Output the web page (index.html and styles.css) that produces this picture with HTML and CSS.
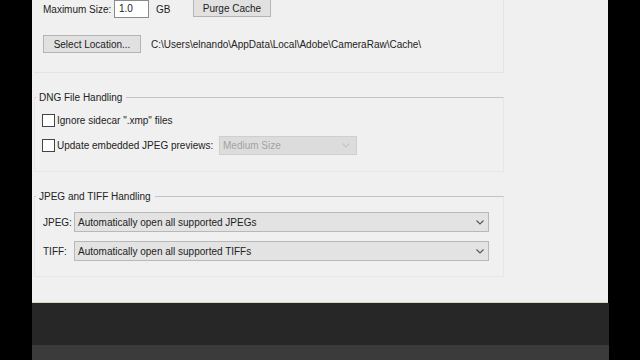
FILE: index.html
```html
<!DOCTYPE html>
<html>
<head>
<meta charset="utf-8">
<link rel="stylesheet" href="styles.css">
</head>
<body>
<div class="screen">
  <div class="dialog">
    <div class="group-cache">
      <div class="row row-size">
        <span class="label">Maximum Size:</span>
        <span class="input">1.0</span>
        <span class="unit">GB</span>
        <span class="btn btn-purge">Purge Cache</span>
      </div>
      <div class="row row-loc">
        <span class="btn btn-loc">Select Location...</span>
        <span class="path">C:\Users\elnando\AppData\Local\Adobe\CameraRaw\Cache\</span>
      </div>
    </div>

    <fieldset class="group group-dng">
      <legend>DNG File Handling</legend>
      <div class="check-row first"><span class="box"></span><span>Ignore sidecar ".xmp" files</span></div>
      <div class="check-row"><span class="box"></span><span class="check-label">Update embedded JPEG previews:</span>
        <span class="select disabled"><span>Medium Size</span><svg class="chev" width="8" height="5" viewBox="0 0 8 5"><path d="M0.5 0.5 L4 4 L7.5 0.5" fill="none" stroke="#c4c4c4" stroke-width="1.1"/></svg></span>
      </div>
    </fieldset>

    <fieldset class="group group-jt">
      <legend>JPEG and TIFF Handling</legend>
      <div class="sel-row first"><span class="sel-label">JPEG:</span>
        <span class="select wide"><span>Automatically open all supported JPEGs</span><svg class="chev" width="8" height="5" viewBox="0 0 8 5"><path d="M0.5 0.5 L4 4 L7.5 0.5" fill="none" stroke="#555" stroke-width="1.1"/></svg></span>
      </div>
      <div class="sel-row"><span class="sel-label">TIFF:</span>
        <span class="select wide"><span>Automatically open all supported TIFFs</span><svg class="chev" width="8" height="5" viewBox="0 0 8 5"><path d="M0.5 0.5 L4 4 L7.5 0.5" fill="none" stroke="#555" stroke-width="1.1"/></svg></span>
      </div>
    </fieldset>
  </div>
  <div class="taskbar"></div>
  <div class="band"></div>
</div>
</body>
</html>
```

FILE: styles.css
```css
html, body {
  margin: 0;
  padding: 0;
  background: #000;
}
.screen {
  width: 640px;
  height: 360px;
  overflow: hidden;
  padding: 0 32px;
  box-sizing: border-box;
  display: flex;
  flex-direction: column;
  font-family: "Liberation Sans", Arial, sans-serif;
  font-size: 10px;
  color: #222;
  white-space: nowrap;
}
.dialog {
  width: 576px;
  height: 303px;
  flex: none;
  background: #f0f0f0;
  border-bottom: 1px solid #d8d4c4;
  box-sizing: border-box;
  padding-left: 2px;
  overflow: hidden;
}
.group-cache {
  width: 470px;
  height: 73px;
  box-sizing: border-box;
  border-right: 1px solid #e4e4e4;
  border-bottom: 1px solid #e4e4e4;
  padding-left: 9px;
}
.row {
  display: flex;
  align-items: center;
  height: 18px;
}
.row-loc {
  margin-top: 17px;
}
.label {
  width: 71px;
}
.input {
  width: 35px;
  height: 18px;
  box-sizing: border-box;
  background: #fff;
  border: 1px solid #8a8a8a;
  padding-left: 4px;
  line-height: 16px;
}
.unit {
  margin-left: 7px;
  width: 37px;
}
.btn {
  height: 18px;
  box-sizing: border-box;
  background: #e1e1e1;
  border: 1px solid #b4b4b4;
  display: flex;
  align-items: center;
  justify-content: center;
}
.btn-purge {
  width: 78px;
  margin-top: -2px;
}
.btn-loc {
  width: 98px;
}
.path {
  margin-left: 10px;
}
.group {
  margin: 0;
  padding: 0 0 0 7px;
  width: 470px;
  box-sizing: border-box;
  border: 1px solid #e6e6e6;
  border-top-color: #c4c4c4;
  min-inline-size: 0;
}
.group legend {
  margin-left: -6px;
  padding: 0 4px 0 3px;
  height: 12px;
  line-height: 13px;
}
.group-dng {
  margin-top: 18px;
  height: 81px;
}
.group-jt {
  margin-top: 18px;
  height: 87px;
}
.check-row {
  display: flex;
  align-items: center;
  height: 19px;
  margin-top: 6px;
}
.check-row.first {
  margin-top: 8px;
}
.box {
  width: 13px;
  height: 13px;
  box-sizing: border-box;
  border: 1px solid #444;
  background: #fff;
  margin-right: 2px;
}
.check-label {
  width: 162px;
}
.select {
  height: 19px;
  box-sizing: border-box;
  display: flex;
  align-items: center;
  justify-content: space-between;
  padding: 0 4px 0 3px;
  border: 1px solid #b8b8b8;
  background: #e3e3e3;
}
.select.disabled {
  width: 138px;
  background: #dcdcdc;
  border-color: #cfcfcf;
  color: #a3a3a3;
  padding-right: 6px;
}
.sel-row {
  display: flex;
  align-items: center;
  height: 20px;
  margin-top: 9px;
}
.sel-row.first {
  margin-top: 10px;
}
.sel-label {
  width: 32px;
  padding-left: 1px;
  box-sizing: border-box;
}
.select.wide {
  width: 415px;
  height: 20px;
}
.taskbar {
  height: 42px;
  flex: none;
  width: 577px;
  background: #272727;
}
.band {
  height: 15px;
  flex: none;
  width: 577px;
  background: #3b3b3b;
}
```
